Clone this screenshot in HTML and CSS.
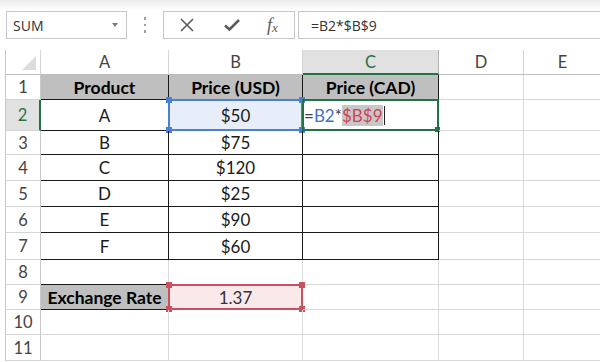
FILE: index.html
```html
<!DOCTYPE html>
<html>
<head>
<meta charset="utf-8">
<link rel="stylesheet" href="styles.css">
</head>
<body>
<div class="fbar">
  <div class="namebox"><span class="nb-text">SUM</span><span class="caret"></span></div>
  <div class="dots"><i></i><i></i><i></i></div>
  <div class="btnbox">
    <svg class="ic" width="16" height="16" viewBox="0 0 16 16"><path d="M2 2L14 14M14 2L2 14" stroke="#5a5a5a" stroke-width="1.6" fill="none"/></svg>
    <svg class="ic" width="18" height="16" viewBox="0 0 18 16"><path d="M2 8.5L6.5 12.5L16 3" stroke="#5a5a5a" stroke-width="2.6" fill="none"/></svg>
    <span class="fx">f<sub>x</sub></span>
  </div>
  <div class="fbox">=B2*$B$9</div>
</div>

<div class="sheet">
  <div class="corner"><span class="tri"></span></div>
  <div class="ch">A</div>
  <div class="ch">B</div>
  <div class="ch sel">C</div>
  <div class="ch">D</div>
  <div class="ch">E</div>

  <div class="rh">1</div>
  <div class="c t th">Product</div>
  <div class="c t th">Price (USD)</div>
  <div class="c t th">Price (CAD)</div>
  <div class="c"></div>
  <div class="c"></div>

  <div class="rh sel">2</div>
  <div class="c t">A</div>
  <div class="c t refb">$50<span class="box blue"><i class="h tl"></i><i class="h tr"></i><i class="h bl"></i><i class="h br"></i></span></div>
  <div class="c t edit"><span class="fm"><span class="k">=</span><span class="bl">B2</span><span class="k">*</span><span class="rd">$B$9</span></span><span class="cur"></span><span class="act"><i class="fill"></i></span></div>
  <div class="c"></div>
  <div class="c"></div>

  <div class="rh">3</div>
  <div class="c t">B</div>
  <div class="c t">$75</div>
  <div class="c t"></div>
  <div class="c"></div>
  <div class="c"></div>

  <div class="rh">4</div>
  <div class="c t">C</div>
  <div class="c t">$120</div>
  <div class="c t"></div>
  <div class="c"></div>
  <div class="c"></div>

  <div class="rh">5</div>
  <div class="c t">D</div>
  <div class="c t">$25</div>
  <div class="c t"></div>
  <div class="c"></div>
  <div class="c"></div>

  <div class="rh">6</div>
  <div class="c t">E</div>
  <div class="c t">$90</div>
  <div class="c t"></div>
  <div class="c"></div>
  <div class="c"></div>

  <div class="rh">7</div>
  <div class="c t">F</div>
  <div class="c t">$60</div>
  <div class="c t"></div>
  <div class="c"></div>
  <div class="c"></div>

  <div class="rh">8</div>
  <div class="c above"></div>
  <div class="c"></div>
  <div class="c"></div>
  <div class="c"></div>
  <div class="c"></div>

  <div class="rh">9</div>
  <div class="c th ex">Exchange Rate</div>
  <div class="c refr">1.37<span class="box red"><i class="h tl"></i><i class="h tr"></i><i class="h bl"></i><i class="h br"></i></span></div>
  <div class="c"></div>
  <div class="c"></div>
  <div class="c"></div>

  <div class="rh">10</div>
  <div class="c"></div>
  <div class="c"></div>
  <div class="c"></div>
  <div class="c"></div>
  <div class="c"></div>

  <div class="rh">11</div>
  <div class="c"></div>
  <div class="c"></div>
  <div class="c"></div>
  <div class="c"></div>
  <div class="c"></div>
</div>
</body>
</html>
```
FILE: styles.css
```css
* { box-sizing: border-box; }
html, body { margin: 0; padding: 0; }
body {
  width: 600px;
  height: 362px;
  overflow: hidden;
  background: linear-gradient(#ebebeb 0px, #f6f6f6 6px, #ffffff 10px);
  font-family: Lato, "Liberation Sans", sans-serif;
}

.fbar {
  display: flex;
  align-items: center;
  height: 28px;
  margin-top: 11px;
  padding-left: 6px;
}
.namebox {
  width: 121px;
  height: 28px;
  border: 1px solid #c6c6c6;
  background: #fff;
  display: flex;
  align-items: center;
  justify-content: space-between;
  padding: 0 8px 0 6px;
}
.nb-text { font-size: 14px; color: #333; font-family: "Open Sans", sans-serif; }
.caret {
  width: 0; height: 0;
  border-left: 3.5px solid transparent;
  border-right: 3.5px solid transparent;
  border-top: 4px solid #7a7a7a;
}
.dots {
  width: 36px;
  display: flex;
  flex-direction: column;
  align-items: center;
  gap: 4px;
}
.dots i { width: 2.5px; height: 2.5px; background: #a0a0a0; display: block; }
.btnbox {
  width: 132px;
  height: 28px;
  border: 1px solid #c6c6c6;
  background: #fff;
  display: flex;
  align-items: center;
  padding-left: 15px;
  gap: 28px;
}
.fx {
  font-family: "Liberation Serif", serif;
  font-style: italic;
  font-size: 18px;
  color: #5a5a5a;
  line-height: 1;
  margin-left: -2px;
}
.fx sub { font-size: 13px; vertical-align: -1px; }
.fbox {
  flex: 1;
  height: 28px;
  margin-left: 3px;
  border: 1px solid #c6c6c6;
  border-right: none;
  background: #fff;
  display: flex;
  align-items: center;
  padding-left: 12px;
  font-family: "Open Sans", sans-serif;
  font-size: 14px;
  color: #333;
}

.sheet {
  margin-top: 11px;
  margin-left: 5px;
  border-left: 1px solid #c8c8c8;
  display: grid;
  grid-template-columns: 35px 128px 134px 136px 85px 78px;
  grid-template-rows: 25px 25px 31px 24px 26px 26px 26px 27px 25px 25px 25px 26px;
  background: #fff;
  font-size: 17px;
  color: #1a1a1a;
}
.corner {
  border-right: 1px solid #d4d4d4;
  border-bottom: 1px solid #c0c0c0;
  position: relative;
}
.tri {
  position: absolute;
  right: 4px;
  bottom: 4px;
  width: 0; height: 0;
  border-left: 14px solid transparent;
  border-bottom: 14px solid #dcdcdc;
}
.ch {
  border-right: 1px solid #d4d4d4;
  border-bottom: 1px solid #bdbdbd;
  display: flex;
  align-items: center;
  justify-content: center;
  color: #444;
  font-size: 16.5px;
}
.ch.sel {
  background: #e1e1e1;
  color: #217346;
  border-right-color: #b0b0b0;
  border-bottom: 2px solid #217346;
}
.rh {
  border-right: 1px solid #c8c8c8;
  border-bottom: 1px solid #d4d4d4;
  display: flex;
  align-items: center;
  justify-content: center;
  color: #444;
  font-size: 16.5px;
}
.rh.sel {
  background: #e1e1e1;
  color: #217346;
  border-right: 2px solid #217346;
}
.c {
  border-right: 1px solid #d9d9d9;
  border-bottom: 1px solid #d9d9d9;
  display: flex;
  align-items: center;
  justify-content: center;
  position: relative;
}
.c.t { border-right-color: #1a1a1a; border-bottom-color: #1a1a1a; }
.c.th { background: #bfbfbf; font-weight: bold; color: #000; font-size: 17.5px; }
.c.above { border-bottom-color: #1a1a1a; }
.c.ex { border-bottom-color: #1a1a1a; border-right-color: #1a1a1a; }

.refb { background: #e8eef9; }
.refr { background: #fae9ea; color: #333; }
.box {
  position: absolute;
  left: -1px;
  top: -1px;
  right: -1px;
  bottom: -1px;
  border: 2px solid #4a7fd6;
}
.box.red { border-color: #c9505c; }
.h {
  position: absolute;
  width: 6px;
  height: 6px;
  background: #4a7fd6;
}
.red .h { background: #c9505c; }
.h.tl { left: -4px; top: -4px; }
.h.tr { right: -4px; top: -4px; }
.h.bl { left: -4px; bottom: -4px; }
.h.br { right: -4px; bottom: -4px; }

.edit { justify-content: flex-start; }
.fm { padding-left: 1px; }
.k { color: #404040; }
.bl { color: #4472c4; }
.rd { color: #d0435a; background: #c8c8c8; }
.cur {
  display: inline-block;
  width: 1px;
  height: 19px;
  background: #222;
  margin-left: 1px;
}
.act {
  position: absolute;
  left: -1px;
  top: -1px;
  right: -1px;
  bottom: -1px;
  border: 2px solid #217346;
}
.fill {
  position: absolute;
  right: -3px;
  bottom: -3px;
  width: 5px;
  height: 5px;
  background: #217346;
}
```
